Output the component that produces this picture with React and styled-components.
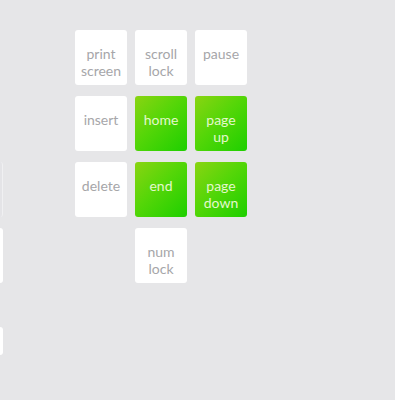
import React from "react";
import styled, { createGlobalStyle } from "styled-components";

const Global = createGlobalStyle`
  html, body {
    margin: 0;
    padding: 0;
    background: #e6e6e8;
    overflow: hidden;
  }
  body {
    font-family: Lato, "Open Sans", sans-serif;
  }
`

const Board = styled.div`
  display: flex;
  align-items: flex-start;
  gap: 72px;
  padding-top: 30px;
  margin-left: -49px;
  height: 400px;
  box-sizing: border-box;
`

const SideColumn = styled.div`
  display: flex;
  flex-direction: column;
  width: 52px;
  padding-top: 132px;
`

const Pad = styled.div`
  display: grid;
  grid-template-columns: repeat(3, 52px);
  grid-auto-rows: 55px;
  column-gap: 8px;
  row-gap: 11px;
`

const Key = styled.div`
  display: flex;
  align-items: flex-start;
  justify-content: center;
  text-align: center;
  width: 52px;
  height: ${props => props.h || 55}px;
  margin-top: ${props => props.mt || 0}px;
  box-sizing: border-box;
  border-radius: 3px;
  font-size: 14px;
  line-height: 17px;
  padding-top: 15px;
  color: ${props => props.green ? "#e4f8cc" : "#a6a6a9"};
  background: ${props => props.green
    ? "linear-gradient(135deg, #8ad412 0%, #55d608 45%, #1ecf00 100%)"
    : props.ghost ? "#e4e4e7" : "#ffffff"};
  border-right: ${props => props.ghost ? "1px solid #f0f0f2" : "none"};
  grid-column: ${props => props.col || "auto"};
`

const keys = [
  { label: ["print", "screen"] },
  { label: ["scroll", "lock"] },
  { label: ["pause"] },
  { label: ["insert"] },
  { label: ["home"], green: true },
  { label: ["page", "up"], green: true },
  { label: ["delete"] },
  { label: ["end"], green: true },
  { label: ["page", "down"], green: true },
  { label: ["num", "lock"], col: 2 },
]

export default function App() {
  return (
    <>
      <Global />
      <Board>
        <SideColumn>
          <Key ghost />
          <Key mt={11} />
          <Key mt={44} h={28} />
        </SideColumn>
        <Pad>
          {keys.map((k, i) => (
            <Key key={i} green={k.green} col={k.col}>
              <span>
                {k.label.map((l, j) => (
                  <React.Fragment key={j}>
                    {j > 0 && <br />}
                    {l}
                  </React.Fragment>
                ))}
              </span>
            </Key>
          ))}
        </Pad>
      </Board>
    </>
  )
}
